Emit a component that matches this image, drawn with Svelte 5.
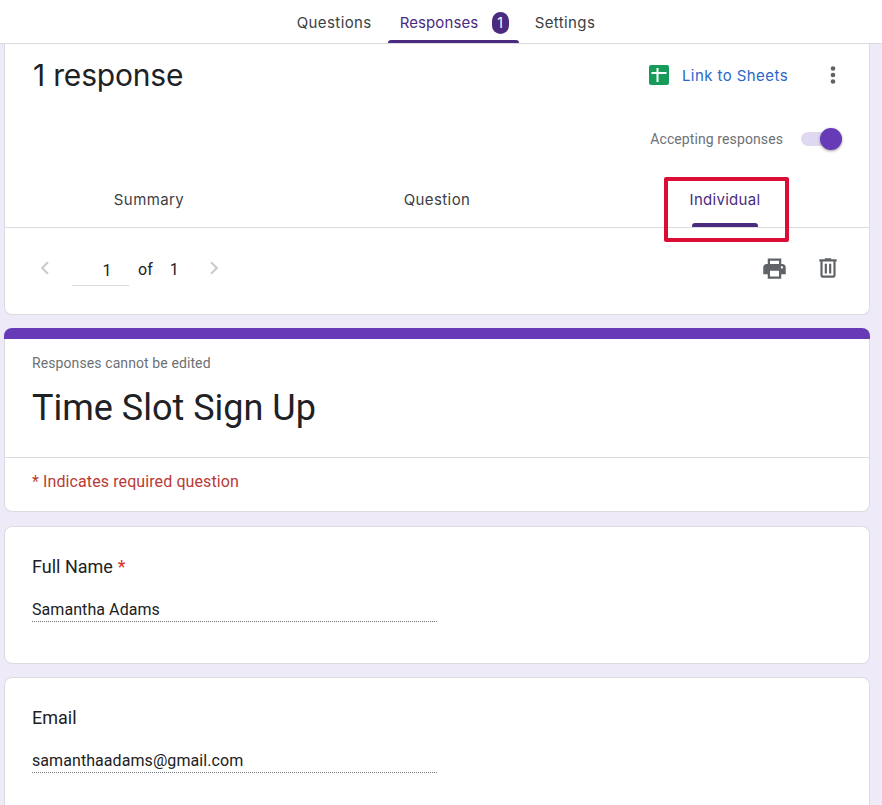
<script lang="ts">
  let activeTab = $state('Responses');
  let activeView = $state('Individual');
  let accepting = $state(true);
  let current = $state(1);

  const tabs = ['Questions', 'Responses', 'Settings'];
  const views = ['Summary', 'Question', 'Individual'];
  const responseCount = 1;

  const answers = [
    { label: 'Full Name', required: true, value: 'Samantha Adams' },
    { label: 'Email', required: false, value: 'samanthaadams@gmail.com' }
  ];
</script>

<nav class="topbar">
  {#each tabs as tab}
    <button class="tab" class:active={activeTab === tab} onclick={() => (activeTab = tab)}>
      <span>{tab}</span>
      {#if tab === 'Responses'}
        <span class="badge">{responseCount}</span>
      {/if}
    </button>
  {/each}
</nav>

<main>
  <section class="card summary">
    <div class="heading">
      <h1>{responseCount} response</h1>
      <button class="sheets">
        <svg width="20" height="20" viewBox="0 0 20 20">
          <rect width="20" height="20" rx="2" fill="#169c58" />
          <path d="M2.500 8h15M8.500 3v14" stroke="#fff" stroke-width="2" fill="none" />
        </svg>
        <span>Link to Sheets</span>
      </button>
      <button class="more" aria-label="More options">
        <svg width="24" height="24" viewBox="0 0 24 24" fill="#5f6368">
          <circle cx="12" cy="5.500" r="2.300" />
          <circle cx="12" cy="12" r="2.300" />
          <circle cx="12" cy="18.500" r="2.300" />
        </svg>
      </button>
    </div>

    <div class="accepting">
      <span>Accepting responses</span>
      <button
        class="switch"
        class:on={accepting}
        aria-label="Accepting responses"
        onclick={() => (accepting = !accepting)}
      ></button>
    </div>

    <div class="views">
      {#each views as view}
        <button class="view" class:active={activeView === view} onclick={() => (activeView = view)}>
          {view}
          {#if view === 'Individual'}
            <span class="highlight"></span>
          {/if}
        </button>
      {/each}
    </div>

    <div class="pager">
      <button class="arrow" aria-label="Previous response">
        <svg width="26" height="26" viewBox="0 0 24 24" fill="#ccc">
          <path d="M15.41 7.41L14 6l-6 6 6 6 1.41-1.41L10.83 12z" />
        </svg>
      </button>
      <span class="page">{current}</span>
      <span class="of">of</span>
      <span class="total">{responseCount}</span>
      <button class="arrow" aria-label="Next response">
        <svg width="26" height="26" viewBox="0 0 24 24" fill="#ccc">
          <path d="M10 6L8.59 7.41 13.17 12l-4.58 4.59L10 18l6-6z" />
        </svg>
      </button>
      <button class="print" aria-label="Print">
        <svg width="27" height="27" viewBox="0 0 24 24" fill="#5f6368">
          <path d="M19 8h-1V3H6v5H5c-1.66 0-3 1.34-3 3v6h4v4h12v-4h4v-6c0-1.66-1.34-3-3-3zM8 5h8v3H8V5zm8 14H8v-5h8v5zm2.600-7c-.55 0-1-.45-1-1s.45-1 1-1 1 .45 1 1-.45 1-1 1z" />
        </svg>
      </button>
      <button class="delete" aria-label="Delete">
        <svg width="26" height="26" viewBox="0 0 24 24" fill="#5f6368">
          <path d="M15 4V3H9v1H4v2h1v13c0 1.100.9 2 2 2h10c1.100 0 2-.9 2-2V6h1V4h-5zm2 15H7V6h10v13zM9 8h2v9H9zm4 0h2v9h-2z" />
        </svg>
      </button>
    </div>
  </section>

  <section class="card form-title">
    <div class="stripe"></div>
    <div class="title">
      <p>Responses cannot be edited</p>
      <h2>Time Slot Sign Up</h2>
    </div>
    <div class="required-note">* Indicates required question</div>
  </section>

  {#each answers as answer}
    <section class="card question-card">
      <h3>{answer.label}{#if answer.required}<span class="star">*</span>{/if}</h3>
      <div class="answer">{answer.value}</div>
    </section>
  {/each}
</main>

<style>
  :global(body) {
    background: #eeeaf8;
    height: 805px;
    overflow: hidden;
  }

  button {
    padding: 0;
    border: none;
    background: none;
    font: inherit;
    letter-spacing: inherit;
    color: inherit;
    cursor: pointer;
  }

  svg {
    display: block;
  }

  h1, h2, h3, p {
    margin: 0;
    font-weight: 400;
  }

  .topbar {
    display: flex;
    justify-content: center;
    gap: 4px;
    box-sizing: border-box;
    height: 44px;
    padding-left: 10px;
    background: #fff;
    border-bottom: 1px solid #dadce0;
    font-family: Inter, sans-serif;
    font-size: 15px;
    letter-spacing: 0.4px;
    color: #3c4043;
  }

  .tab {
    position: relative;
    display: flex;
    align-items: center;
    justify-content: space-between;
    box-sizing: border-box;
    height: 43px;
    padding: 2px 12px 0;
  }

  .tab.active {
    width: 131px;
    padding: 2px 10px 0 12px;
    letter-spacing: 0.1px;
    color: #4a2b80;
  }

  .tab.active::after {
    content: '';
    position: absolute;
    left: 0;
    right: 0;
    bottom: 0;
    height: 3px;
    border-radius: 3px 3px 0 0;
    background: #4a2b80;
  }

  .badge {
    width: 17px;
    height: 22px;
    line-height: 22px;
    border-radius: 9px;
    background: #4a2b80;
    color: #fff;
    font-size: 14px;
    text-align: center;
  }

  main {
    display: flex;
    flex-direction: column;
    gap: 13px;
    width: 866px;
    margin-left: 4px;
    font-family: Roboto, sans-serif;
    color: #202124;
  }

  .card {
    box-sizing: border-box;
    background: #fff;
    border: 1px solid #dadce0;
    border-radius: 8px;
  }

  .summary {
    height: 271px;
    border-top: none;
    border-radius: 0 0 8px 8px;
  }

  .heading {
    display: flex;
    align-items: center;
    box-sizing: border-box;
    height: 64px;
    padding: 0 24px 2px 28px;
    font-family: Inter, sans-serif;
  }

  h1 {
    flex: 1;
    font-size: 30px;
    letter-spacing: -0.2px;
  }

  .sheets {
    display: flex;
    align-items: center;
    gap: 13px;
    margin-right: 33px;
    color: #2a68c8;
    font-size: 15px;
    letter-spacing: 0.43px;
  }

  .accepting {
    display: flex;
    justify-content: flex-end;
    align-items: center;
    gap: 18px;
    height: 62px;
    padding-right: 27px;
    font-size: 14px;
    letter-spacing: 0.1px;
    color: #6d7175;
  }

  .switch {
    position: relative;
    width: 41px;
    height: 14px;
    border-radius: 7px;
    background: #ccc;
  }

  .switch::after {
    content: '';
    position: absolute;
    top: -4px;
    left: 0;
    width: 22px;
    height: 22px;
    border-radius: 50%;
    background: #fff;
    box-shadow: 0 1px 3px rgba(0, 0, 0, 0.4);
  }

  .switch.on {
    background: #e0d8f1;
  }

  .switch.on::after {
    left: 19px;
    background: #673ab7;
  }

  .views {
    display: grid;
    grid-template-columns: repeat(3, 1fr);
    height: 57px;
    border-bottom: 1px solid #dadce0;
    font-family: Inter, sans-serif;
    font-size: 15px;
    letter-spacing: 0.4px;
    color: #3c4043;
  }

  .view {
    position: relative;
    padding-top: 1px;
  }

  .view.active {
    letter-spacing: 0.3px;
    color: #4a2b80;
  }

  .view.active::after {
    content: '';
    position: absolute;
    left: 111px;
    bottom: 0;
    width: 66px;
    height: 4px;
    border-radius: 3px 3px 0 0;
    background: #4a2b80;
  }

  .highlight {
    position: absolute;
    top: 7px;
    left: 83px;
    box-sizing: border-box;
    width: 125px;
    height: 65px;
    border: 4px solid #db0d35;
    border-radius: 2px;
  }

  .pager {
    display: flex;
    align-items: center;
    height: 81px;
    padding: 0 28px 0 27px;
    font-size: 16px;
  }

  .arrow {
    padding-bottom: 2px;
  }

  .page {
    box-sizing: border-box;
    width: 57px;
    height: 31px;
    margin: 4px 9px 0 14px;
    padding-left: 13px;
    border-bottom: 1px solid #dadce0;
    line-height: 32px;
    text-align: center;
  }

  .of, .total {
    padding-top: 2px;
  }

  .total {
    margin: 0 22px 0 17px;
  }

  .print {
    margin: 0 27px 0 auto;
  }

  .delete {
    padding-bottom: 1px;
  }

  .form-title {
    height: 184px;
    margin-bottom: 1px;
    border-top: none;
  }

  .stripe {
    height: 11px;
    margin: 0 -1px;
    border-radius: 8px 8px 0 0;
    background: #673ab7;
  }

  .title {
    box-sizing: border-box;
    height: 119px;
    padding: 15px 27px 0;
    border-bottom: 1px solid #dadce0;
  }

  .title p {
    font-size: 14px;
    line-height: 18px;
    letter-spacing: 0.1px;
    color: #6d7175;
  }

  h2 {
    margin-top: 14px;
    font-size: 36px;
    line-height: 44px;
  }

  .required-note {
    padding: 14px 27px 0;
    font-size: 16px;
    line-height: 20px;
    letter-spacing: 0.1px;
    color: #b93a36;
  }

  .question-card {
    height: 138px;
    padding: 28px 27px 0;
  }

  h3 {
    font-size: 18px;
    line-height: 24px;
  }

  .star {
    margin-left: 5px;
    color: #d93025;
  }

  .answer {
    width: 405px;
    margin-top: 20px;
    padding-bottom: 1px;
    border-bottom: 1px dotted #70757a;
    font-size: 16px;
    line-height: 21px;
    letter-spacing: 0.07px;
  }
</style>
